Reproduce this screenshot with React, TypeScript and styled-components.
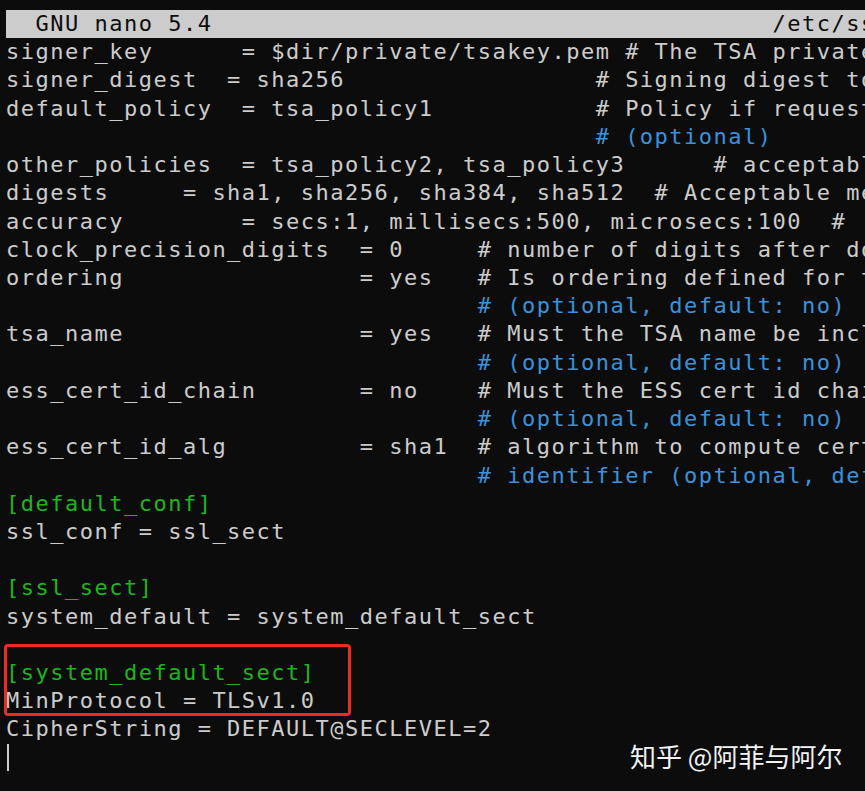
import React from 'react';
import styled, { createGlobalStyle } from 'styled-components';

const CELL = 14.74;
const ROW = 28.22;

const GlobalStyle = createGlobalStyle`
  html, body {
    margin: 0;
    padding: 0;
    background: #0c0c0c;
  }
`;

const Screen = styled.div`
  position: relative;
  width: 865px;
  height: 791px;
  overflow: hidden;
  background: #0c0c0c;
  padding: 10px 0 0 6px;
  box-sizing: border-box;
  font-family: 'DejaVu Sans Mono', 'Liberation Mono', monospace;
  font-size: 22px;
  letter-spacing: ${CELL - 22 * 0.602}px;
  line-height: ${ROW}px;
  color: #cccccc;
`;

const TitleBar = styled.div`
  display: flex;
  width: 900px;
  height: ${ROW}px;
  background: #cccccc;
  color: #0c0c0c;
  white-space: pre;
`;

const TitleName = styled.span`
  width: ${CELL * 52}px;
  flex: none;
`;

const Line = styled.div<{ $tone?: 'plain' | 'comment' | 'section' }>`
  height: ${ROW}px;
  white-space: pre;
  color: ${p =>
    p.$tone === 'comment' ? '#3a92dc' : p.$tone === 'section' ? '#1cb51c' : '#cccccc'};
`;

const Cursor = styled.span`
  display: inline-block;
  width: 2px;
  height: 27px;
  margin-left: 1px;
  vertical-align: top;
  background: #cccccc;
`;

const Highlight = styled.div`
  position: absolute;
  left: 4px;
  top: 644px;
  width: 347px;
  height: 72px;
  box-sizing: border-box;
  border: 3px solid #ee2a24;
  border-radius: 4px;
`;

const Watermark = styled.div`
  position: absolute;
  left: 630px;
  top: 742px;
  font-family: 'Noto Sans CJK SC', 'Noto Sans', sans-serif;
  font-size: 26px;
  line-height: 28px;
  letter-spacing: 0;
  color: #f2f2f2;
  white-space: pre;
`;

type Tone = 'plain' | 'comment' | 'section';

const pad = (s: string, col: number) => s + ' '.repeat(Math.max(1, col - s.length));

const lines: [string, Tone][] = [
  ['signer_key      = $dir/private/tsakey.pem # The TSA private key (optional)', 'plain'],
  [pad('signer_digest  = sha256', 40) + '# Signing digest to use. (Optional)', 'plain'],
  [pad('default_policy  = tsa_policy1', 40) + '# Policy if request did not specify it', 'plain'],
  [' '.repeat(40) + '# (optional)', 'comment'],
  [pad('other_policies  = tsa_policy2, tsa_policy3', 48) + '# acceptable policies (optional)', 'plain'],
  ['digests     = sha1, sha256, sha384, sha512  # Acceptable message digests (mandatory)', 'plain'],
  [pad('accuracy        = secs:1, millisecs:500, microsecs:100', 56) + '# (optional)', 'plain'],
  [pad('clock_precision_digits  = 0', 32) + '# number of digits after dot. (optional)', 'plain'],
  [pad(pad('ordering', 24) + '= yes', 32) + '# Is ordering defined for timestamps?', 'plain'],
  [' '.repeat(32) + '# (optional, default: no)', 'comment'],
  [pad(pad('tsa_name', 24) + '= yes', 32) + '# Must the TSA name be included in the reply?', 'plain'],
  [' '.repeat(32) + '# (optional, default: no)', 'comment'],
  [pad(pad('ess_cert_id_chain', 24) + '= no', 32) + '# Must the ESS cert id chain be included?', 'plain'],
  [' '.repeat(32) + '# (optional, default: no)', 'comment'],
  [pad(pad('ess_cert_id_alg', 24) + '= sha1', 32) + '# algorithm to compute certificate', 'plain'],
  [' '.repeat(32) + '# identifier (optional, default: sha1)', 'comment'],
  ['[default_conf]', 'section'],
  ['ssl_conf = ssl_sect', 'plain'],
  ['', 'plain'],
  ['[ssl_sect]', 'section'],
  ['system_default = system_default_sect', 'plain'],
  ['', 'plain'],
  ['[system_default_sect]', 'section'],
  ['MinProtocol = TLSv1.0', 'plain'],
  ['CipherString = DEFAULT@SECLEVEL=2', 'plain'],
];

const App: React.FC = () => {
  return (
    <>
      <GlobalStyle />
      <Screen>
        <TitleBar>
          <TitleName>{'  GNU nano 5.4'}</TitleName>
          <span>/etc/ssl/openssl.cnf</span>
        </TitleBar>
        {lines.map(([text, tone], i) => (
          <Line key={i} $tone={tone}>
            {text}
          </Line>
        ))}
        <Line>
          <Cursor />
        </Line>
        <Highlight />
        <Watermark>知乎 @阿菲与阿尔</Watermark>
      </Screen>
    </>
  );
};

export default App;
